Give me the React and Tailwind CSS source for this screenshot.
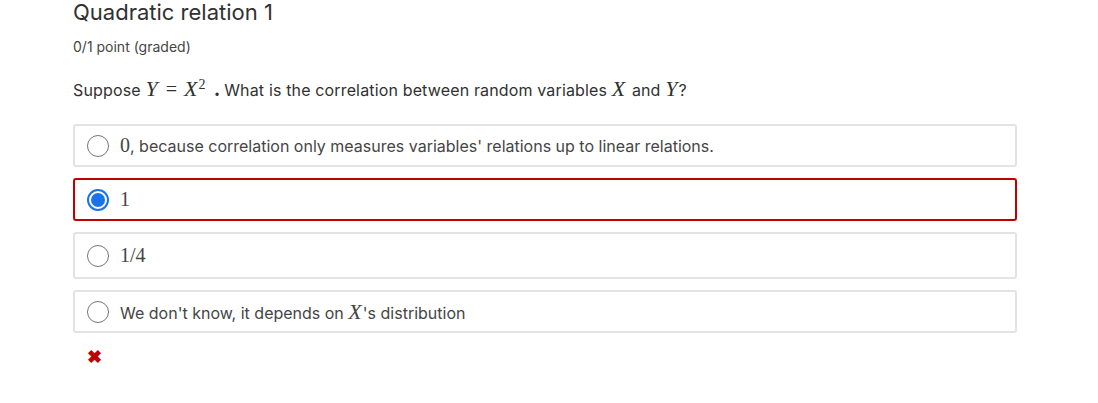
import React from 'react';

const M = ({ children, italic = true, className = '' }) => (
  <span
    className={(italic ? 'italic text-[22px] ' : 'text-[20px] ') + 'leading-none tracking-normal ' + className}
    style={{ fontFamily: '"Liberation Serif", "DejaVu Serif", serif' }}
  >
    {children}
  </span>
);

function Radio({ checked }) {
  if (checked) {
    return (
      <span className="flex h-[22px] w-[22px] shrink-0 items-center justify-center rounded-full border-2 border-[#1a73e8] bg-white">
        <span className="h-[14px] w-[14px] rounded-full bg-[#1a73e8]" />
      </span>
    );
  }
  return <span className="h-[22px] w-[22px] shrink-0 rounded-full border border-[#767676] bg-white" />;
}

function Option({ checked, wrong, tall, children }) {
  return (
    <label
      className={
        'flex items-center gap-[11px] rounded-[3px] border-2 bg-white pl-[12px] ' +
        (tall ? 'h-[47px] ' : 'h-[43px] ') +
        (wrong ? 'border-[#c00000]' : 'border-[#e3e3e3]')
      }
    >
      <Radio checked={checked} />
      <span className="text-[16px] leading-[20px] text-[#454545]">{children}</span>
    </label>
  );
}

export default function App() {
  return (
    <div className="min-h-[403px] bg-white" style={{ fontFamily: 'Inter, "Open Sans", sans-serif' }}>
      <div className="w-[944px] ml-[73px]">
        <h2 className="text-[22px] leading-[24px] text-[#313131] font-normal">Quadratic relation 1</h2>
        <div className="mt-[13px] text-[14px] leading-[20px] text-[#454545]">0/1 point (graded)</div>
        <p className="mt-[21px] text-[16px] leading-[24px] tracking-[0.15px] text-[#313131]">
          Suppose <M className="mr-[1px]">Y</M>
          <M italic={false} className="mx-[7px]">=</M>
          <M className="mr-[1px]">X</M>
          <sup className="text-[14px]" style={{ fontFamily: '"Liberation Serif", serif' }}>2</sup>
          <M italic={false} className="ml-[9px] font-bold">.</M> What is the correlation between random variables <M className="mr-[2px]">X</M> and <M className="mr-[1px]">Y</M>?
        </p>
        <div className="mt-[22px] flex flex-col gap-[11px]">
          <Option>
            <M italic={false}>0</M>, because correlation only measures variables' relations up to linear relations.
          </Option>
          <Option checked wrong>
            <M italic={false}>1</M>
          </Option>
          <Option tall>
            <M italic={false}>1/4</M>
          </Option>
          <Option>
            We don't know, it depends on <M className="mr-[1px]">X</M>'s distribution
          </Option>
        </div>
        <div className="mt-[14px] pl-[14px] text-[18px] leading-[20px] font-bold text-[#c00000]">✖</div>
      </div>
    </div>
  );
}
